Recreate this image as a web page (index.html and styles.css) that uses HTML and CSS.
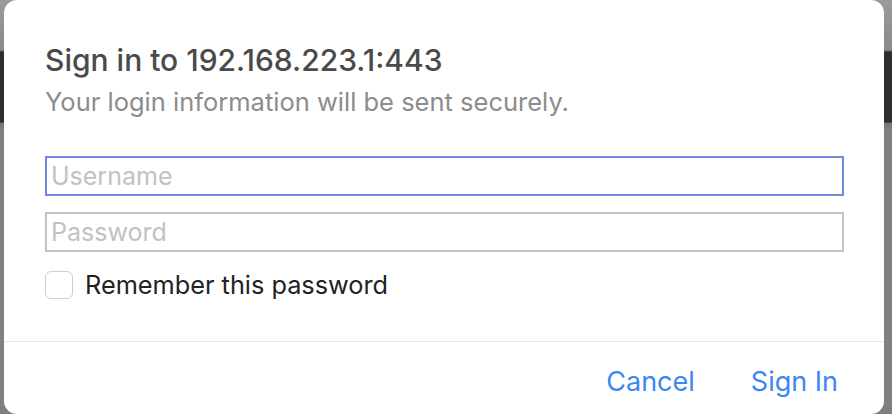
FILE: index.html
```html
<!DOCTYPE html>
<html lang="en">
<head>
<meta charset="utf-8">
<title>Sign in</title>
<link rel="stylesheet" href="styles.css">
</head>
<body>
<div class="backdrop">
  <div class="dialog">
    <div class="body">
      <h1 class="title">Sign in to 192.168.223.1:443</h1>
      <p class="subtitle">Your login information will be sent securely.</p>
      <div class="fields">
        <input class="field focused" type="text" placeholder="Username">
        <input class="field" type="password" placeholder="Password">
      </div>
      <label class="remember">
        <span class="checkbox"></span>
        <span class="remember-text">Remember this password</span>
      </label>
    </div>
    <div class="footer">
      <button class="btn" type="button">Cancel</button>
      <button class="btn" type="button">Sign In</button>
    </div>
  </div>
</div>
</body>
</html>
```
FILE: styles.css
```css
* { box-sizing: border-box; }
html, body { margin: 0; padding: 0; }
body {
  width: 892px;
  height: 414px;
  overflow: hidden;
  font-family: Inter, "Noto Sans", sans-serif;
}
.backdrop {
  height: 414px;
  display: flex;
  justify-content: flex-start;
  padding-left: 4px;
  background: linear-gradient(to bottom,
    #9a9a9a 0px, #8a8a8a 50px,
    #2c2d2f 52px, #2c2d2f 122px,
    #6f6f6f 123px, #808080 128px, #808080 100%);
}
.dialog {
  width: 880px;
  height: 414px;
  background: #ffffff;
  border-radius: 13px;
  display: flex;
  flex-direction: column;
}
.body {
  padding: 42px 41px 0 41px;
  flex: 1;
}
.title {
  margin: 0;
  font-size: 30px;
  line-height: 36px;
  font-weight: 500;
  color: #4a4a4a;
}
.subtitle {
  margin: 9px 0 0 0;
  font-size: 25.5px;
  line-height: 30px;
  color: #8c8c8c;
}
.fields {
  margin-top: 39px;
  display: flex;
  flex-direction: column;
  gap: 16px;
}
.field {
  width: 799px;
  height: 40px;
  border: 2px solid #c3c3c3;
  border-radius: 0;
  padding: 0 4px;
  font-family: inherit;
  font-size: 25px;
  color: #222;
  outline: none;
  background: #fff;
}
.field::placeholder { color: #c2c2c2; }
.field.focused { border-color: #6a8cd9; }
.remember {
  margin-top: 18px;
  display: flex;
  align-items: center;
  gap: 12px;
}
.checkbox {
  width: 28px;
  height: 28px;
  border: 1px solid #cfcfcf;
  border-radius: 6px;
  background: #fff;
}
.remember-text {
  font-size: 25.3px;
  line-height: 30px;
  color: #222;
}
.footer {
  height: 73px;
  border-top: 1px solid #e5e5e5;
  display: flex;
  justify-content: flex-end;
  align-items: flex-start;
  gap: 56px;
  padding: 24px 46px 0 0;
}
.btn {
  border: none;
  background: none;
  padding: 0;
  font-family: inherit;
  font-size: 27px;
  line-height: 32px;
  color: #3b87f1;
}
```
